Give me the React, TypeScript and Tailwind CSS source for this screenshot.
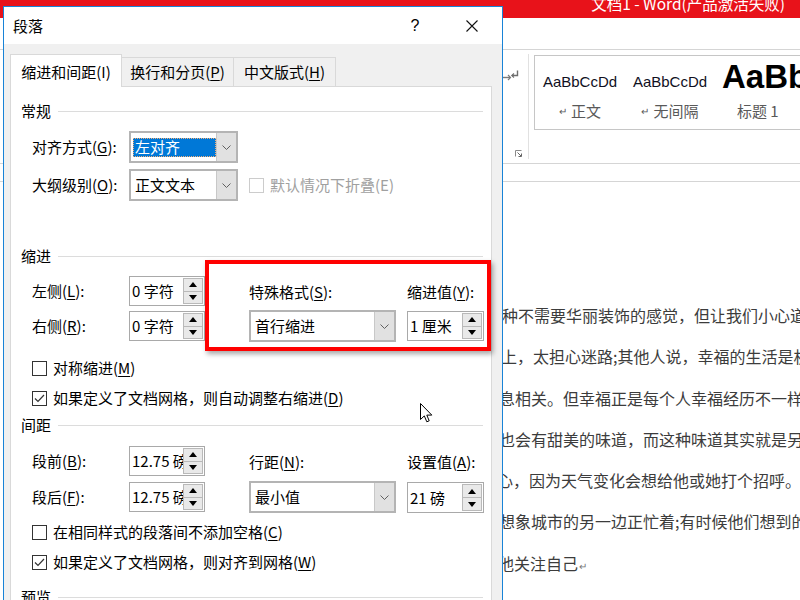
import React from "react";

const CJK = "font-['Microsoft_YaHei','Noto_Sans_CJK_SC',sans-serif]";

function U({ c }: { c: string }) {
  return <span className="underline decoration-1 underline-offset-[2px]">{c}</span>;
}

function Chevron() {
  return (
    <svg width="9" height="5" viewBox="0 0 9 5">
      <path d="M0.5 0.5 L4.5 4.5 L8.5 0.5" fill="none" stroke="#606060" strokeWidth="1" />
    </svg>
  );
}

function Select({ w, children }: { w: string; children: React.ReactNode }) {
  return (
    <div className={`flex h-[32px] ${w} border-2 border-[#b4b4b4] bg-white`}>
      <div className="flex flex-1 items-center overflow-hidden whitespace-nowrap pl-[2px]">{children}</div>
      <div className="flex w-[20px] items-center justify-center border-l border-[#c8c8c8] bg-[#e1e1e1]">
        <Chevron />
      </div>
    </div>
  );
}

function Spin({ w, h, value }: { w: string; h: string; value: string }) {
  return (
    <div className={`flex ${h} ${w} border border-[#a9a9a9] bg-white`}>
      <div className="flex flex-1 items-center overflow-hidden whitespace-nowrap pl-[2px] text-[15px]">{value}</div>
      <div className="flex w-[21px] flex-col p-[1px] pl-0">
        <div className="flex flex-1 items-center justify-center border border-[#b9b9b9] bg-[#e9e9e9]">
          <svg width="8" height="5" viewBox="0 0 8 5">
            <path d="M0 5 L4 0 L8 5 Z" fill="#000" />
          </svg>
        </div>
        <div className="flex flex-1 items-center justify-center border border-t-0 border-[#b9b9b9] bg-[#e9e9e9]">
          <svg width="8" height="5" viewBox="0 0 8 5">
            <path d="M0 0 L8 0 L4 5 Z" fill="#000" />
          </svg>
        </div>
      </div>
    </div>
  );
}

function Check({ checked, disabled }: { checked?: boolean; disabled?: boolean }) {
  return (
    <div
      className={`flex h-[15px] w-[15px] items-center justify-center border bg-white ${
        disabled ? "border-[#cccccc]" : "border-[#333333]"
      }`}
    >
      {checked && (
        <svg width="11" height="9" viewBox="0 0 11 9">
          <path d="M1 4.5 L4 7.5 L10 1" fill="none" stroke="#333333" strokeWidth="1.2" />
        </svg>
      )}
    </div>
  );
}

function CheckRow({ checked, mt, children }: { checked?: boolean; mt: string; children: React.ReactNode }) {
  return (
    <div className={`flex h-[20px] items-center pl-[21px] ${mt}`}>
      <Check checked={checked} />
      <div className="ml-[6px] whitespace-nowrap leading-[20px]">{children}</div>
    </div>
  );
}

function Heading({ mt, text }: { mt: string; text: string }) {
  return (
    <div className={`flex h-[20px] items-center pl-[10px] pr-[8px] ${mt}`}>
      <div className="leading-[20px]">{text}</div>
      <div className="ml-[7px] h-px flex-1 bg-[#dcdcdc]" />
    </div>
  );
}

const docLines: { t: string; ml: string }[] = [
  { t: "种不需要华丽装饰的感觉，但让我们小心道", ml: "ml-[502px]" },
  { t: "上，太担心迷路;其他人说，幸福的生活是机", ml: "ml-[501px]" },
  { t: "息相关。但幸福正是每个人幸福经历不一样", ml: "ml-[499px]" },
  { t: "也会有甜美的味道，而这种味道其实就是另", ml: "ml-[499px]" },
  { t: "心，因为天气变化会想给他或她打个招呼。", ml: "ml-[497px]" },
  { t: "想象城市的另一边正忙着;有时候他们想到的", ml: "ml-[499px]" },
  { t: "他关注自己", ml: "ml-[498px]" },
];

export default function App() {
  return (
    <div className={`relative h-[600px] w-[800px] overflow-hidden bg-white ${CJK}`}>
      {/* Word title bar */}
      <div className="flex h-[18px] justify-end overflow-hidden bg-[#e8121a] pr-[15px]">
        <div className="-mt-[5px] whitespace-nowrap text-[15.5px] leading-[16px] text-white">文档1 - Word(产品激活失败)</div>
      </div>
      {/* Ribbon tabs */}
      <div className="h-[32px] border-b border-[#d5d5d5]" />
      {/* Ribbon body */}
      <div className="flex h-[114px] overflow-hidden border-b border-[#d5d5d5] pl-[503px]">
        <div className="flex w-[25px] shrink-0 flex-col justify-between pb-[6px] pt-[20px]">
          <svg width="16" height="11" viewBox="0 0 16 11">
            <path d="M0 7.5 H7" stroke="#7a7a7a" strokeWidth="1.4" />
            <path d="M5 5 L7.5 7.5 L5 10" fill="none" stroke="#7a7a7a" strokeWidth="1.2" />
            <path d="M14.5 0.5 V5.5 H9" fill="none" stroke="#6e6e6e" strokeWidth="1.4" />
            <path d="M11 3.5 L8.8 5.5 L11 7.5" fill="none" stroke="#6e6e6e" strokeWidth="1.2" />
          </svg>
          <svg className="ml-[12px]" width="7" height="7" viewBox="0 0 7 7">
            <path d="M0.5 6.5 V0.5 H6.5" fill="none" stroke="#8a8a8a" strokeWidth="1" />
            <path d="M2.5 2.5 L6 6 M3.5 6.5 H6.5 V3.5" fill="none" stroke="#666" strokeWidth="1" />
          </svg>
        </div>
        <div className="my-[4px] w-px shrink-0 bg-[#e1e1e1]" />
        <div className="ml-[5px] mt-[5px] flex h-[75px] min-w-0 flex-1 overflow-hidden border border-r-0 border-[#c6c6c6]">
          <div className="flex w-[90px] shrink-0 flex-col items-center pt-[16px]">
            <div className="font-['Liberation_Sans',sans-serif] text-[15px] leading-[20px] text-[#10101e]">AaBbCcDd</div>
            <div className="mt-[9px] flex items-center text-[15px] leading-[20px] text-[#595959]">
              <span className="mr-[4px] text-[10px]">↵</span>正文
            </div>
          </div>
          <div className="flex w-[90px] shrink-0 flex-col items-center pt-[16px]">
            <div className="font-['Liberation_Sans',sans-serif] text-[15px] leading-[20px] text-[#10101e]">AaBbCcDd</div>
            <div className="mt-[9px] flex items-center text-[15px] leading-[20px] text-[#595959]">
              <span className="mr-[4px] text-[10px]">↵</span>无间隔
            </div>
          </div>
          <div className="flex shrink-0 flex-col items-start pl-[7px] pt-[6px]">
            <div className="whitespace-nowrap font-['Liberation_Sans',sans-serif] text-[33px] font-bold leading-[30px] text-[#000]">AaBb</div>
            <div className="ml-[15px] mt-[9px] whitespace-nowrap text-[15px] leading-[20px] text-[#595959]">标题 1</div>
          </div>
        </div>
      </div>
      {/* Ruler strip */}
      <div className="h-[18px] border-b border-[#d5d5d5]" />
      {/* Document */}
      <div className="pt-[113px] text-[16px] leading-[41.3px] text-[#3c3c3c]">
        {docLines.map((l, i) => (
          <div key={i} className={`whitespace-nowrap ${l.ml}`}>
            {l.t}
            {i === docLines.length - 1 && <span className="ml-[1px] text-[10px] text-[#777]">↵</span>}
          </div>
        ))}
      </div>

      {/* Dialog window */}
      <div className="absolute left-[3px] top-[6px] h-[600px] w-[500px] border border-b-0 border-[#1883d7] bg-[#f0f0f0] text-[15px] text-black">
        <div className="flex h-[37px] items-center bg-white">
          <div className="pl-[9px] leading-[20px]">段落</div>
          <div className="flex-1" />
          <div className="flex w-[46px] justify-center font-['Liberation_Sans',sans-serif] text-[16px]">?</div>
          <div className="ml-[11px] flex w-[46px] justify-center">
            <svg width="12" height="12" viewBox="0 0 12 12">
              <path d="M0.5 0.5 L11.5 11.5 M11.5 0.5 L0.5 11.5" stroke="#111" strokeWidth="1.1" />
            </svg>
          </div>
          <div className="w-[7px]" />
        </div>
        <div className="pl-[6px] pt-[10px]">
          {/* Tabs */}
          <div className="flex h-[32px] items-end">
            <div className="relative z-10 -mb-px flex h-[33px] w-[112px] items-center justify-center border border-b-0 border-[#d9d9d9] bg-white pt-[2px] leading-[20px]">
              缩进和间距(I)
            </div>
            <div className="flex h-[29px] w-[112px] items-center justify-center border-r border-t border-[#d9d9d9] leading-[20px]">
              换行和分页(<U c="P" />)
            </div>
            <div className="flex h-[29px] w-[102px] items-center justify-center border-r border-t border-[#d9d9d9] leading-[20px]">
              中文版式(<U c="H" />)
            </div>
          </div>
          {/* Panel */}
          <div className="h-[520px] w-[482px] border border-[#d9d9d9] bg-white pt-[14px] leading-[20px]">
            <Heading mt="mt-0" text="常规" />
            <div className="mt-[10px] flex items-center pl-[21px]">
              <div className="w-[97px] whitespace-nowrap">
                对齐方式(<U c="G" />):
              </div>
              <Select w="w-[109px]">
                <div className="flex h-[19px] w-[83px] items-center border border-dotted border-[#f5b078] bg-[#0078d7] pl-[1px] text-white">
                  左对齐
                </div>
              </Select>
            </div>
            <div className="mt-[6px] flex items-center pl-[21px]">
              <div className="w-[97px] whitespace-nowrap">
                大纲级别(<U c="O" />):
              </div>
              <Select w="w-[109px]">
                <span className="pl-[2px]">正文文本</span>
              </Select>
              <div className="ml-[11px]">
                <Check disabled />
              </div>
              <div className="ml-[6px] whitespace-nowrap text-[#a0a0a0]">默认情况下折叠(E)</div>
            </div>

            <Heading mt="mt-[45px]" text="缩进" />
            <div className="mt-[10px] flex pl-[21px]">
              <div className="w-[217px]">
                <div className="flex items-center">
                  <div className="w-[97px] whitespace-nowrap">
                    左侧(<U c="L" />):
                  </div>
                  <Spin w="w-[76px]" h="h-[30px]" value="0 字符" />
                </div>
                <div className="mt-[5px] flex items-center">
                  <div className="w-[97px] whitespace-nowrap">
                    右侧(<U c="R" />):
                  </div>
                  <Spin w="w-[76px]" h="h-[30px]" value="0 字符" />
                </div>
              </div>
              <div className="w-[158px]">
                <div className="mt-[6px] h-[20px] whitespace-nowrap">
                  特殊格式(<U c="S" />):
                </div>
                <div className="mt-[8px]">
                  <Select w="w-[147px]">
                    <span className="pl-[2px]">首行缩进</span>
                  </Select>
                </div>
              </div>
              <div>
                <div className="mt-[6px] h-[20px] whitespace-nowrap">
                  缩进值(<U c="Y" />):
                </div>
                <div className="mt-[9px]">
                  <Spin w="w-[77px]" h="h-[30px]" value="1 厘米" />
                </div>
              </div>
            </div>
            <CheckRow mt="mt-[16px]">
              对称缩进(<U c="M" />)
            </CheckRow>
            <CheckRow mt="mt-[10px]" checked>
              如果定义了文档网格，则自动调整右缩进(<U c="D" />)
            </CheckRow>

            <Heading mt="mt-[7px]" text="间距" />
            <div className="mt-[11px] flex pl-[21px]">
              <div className="w-[217px]">
                <div className="flex items-center">
                  <div className="w-[97px] whitespace-nowrap">
                    段前(<U c="B" />):
                  </div>
                  <Spin w="w-[76px]" h="h-[30px]" value="12.75 磅" />
                </div>
                <div className="mt-[6px] flex items-center">
                  <div className="w-[97px] whitespace-nowrap">
                    段后(<U c="F" />):
                  </div>
                  <Spin w="w-[76px]" h="h-[30px]" value="12.75 磅" />
                </div>
              </div>
              <div className="w-[158px]">
                <div className="mt-[6px] h-[20px] whitespace-nowrap">
                  行距(<U c="N" />):
                </div>
                <div className="mt-[9px]">
                  <Select w="w-[147px]">
                    <span className="pl-[2px]">最小值</span>
                  </Select>
                </div>
              </div>
              <div>
                <div className="mt-[6px] h-[20px] whitespace-nowrap">
                  设置值(<U c="A" />):
                </div>
                <div className="mt-[10px]">
                  <Spin w="w-[77px]" h="h-[31px]" value="21 磅" />
                </div>
              </div>
            </div>
            <CheckRow mt="mt-[9px]">
              在相同样式的段落间不添加空格(<U c="C" />)
            </CheckRow>
            <CheckRow mt="mt-[10px]" checked>
              如果定义了文档网格，则对齐到网格(<U c="W" />)
            </CheckRow>
            <Heading mt="mt-[15px]" text="预览" />
          </div>
        </div>
      </div>

      {/* Red annotation rectangle */}
      <div className="absolute left-[205px] top-[260px] h-[91px] w-[286px] border-[4px] border-[#ff0000] shadow-[2px_3px_5px_rgba(0,0,0,0.35)]" />

      {/* Mouse cursor */}
      <svg className="absolute left-[420px] top-[403px]" width="13" height="21" viewBox="0 0 13 21">
        <path
          d="M0.5 0.5 L0.5 16.5 L4.3 12.9 L6.8 18.8 L9.2 17.8 L6.8 12.1 L11.8 12.1 Z"
          fill="#fff"
          stroke="#000"
          strokeWidth="1"
          strokeLinejoin="round"
        />
      </svg>
    </div>
  );
}
